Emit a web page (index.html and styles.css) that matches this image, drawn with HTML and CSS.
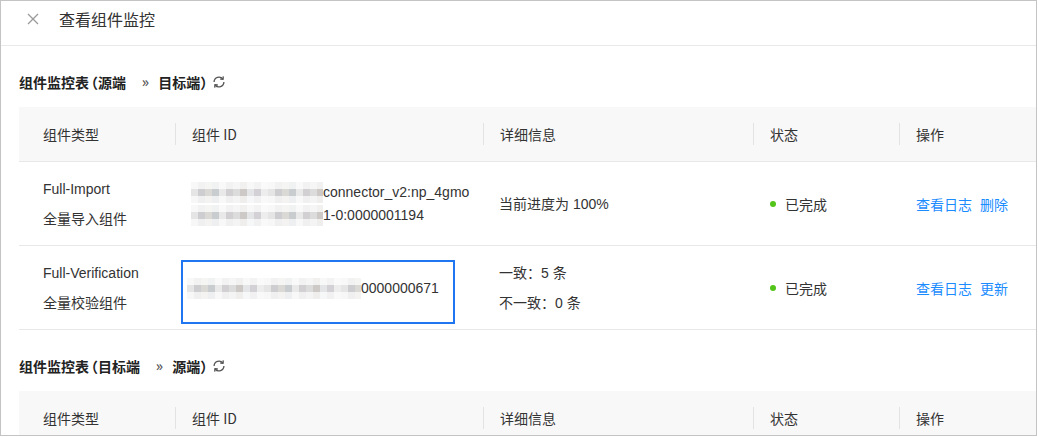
FILE: index.html
```html
<!DOCTYPE html>
<html lang="zh-CN">
<head>
<meta charset="utf-8">
<title>查看组件监控</title>
<link rel="stylesheet" href="styles.css">
</head>
<body>
<div class="frame">
  <header class="topbar">
    <svg class="close" width="12" height="12" viewBox="0 0 12 12" aria-hidden="true">
      <path d="M1 1L11 11M11 1L1 11" stroke="#9a9a9a" stroke-width="1.3" fill="none"/>
    </svg>
    <span class="title">查看组件监控</span>
  </header>

  <main class="content">
    <section class="block">
      <h2 class="block-title">组件监控表<span class="paren open">（</span>源端<span class="arrow">»</span>目标端<span class="paren close-p">）</span>
        <svg class="refresh" width="14" height="14" viewBox="0 0 16 16" aria-hidden="true">
          <path d="M2.4 8A5.6 5.6 0 0 1 12.4 4.6" stroke="#555" stroke-width="1.5" fill="none"/>
          <path d="M12.9 1.6L12.6 4.9L9.4 4.6" stroke="#555" stroke-width="1.5" fill="none"/>
          <path d="M13.6 8A5.6 5.6 0 0 1 3.6 11.4" stroke="#555" stroke-width="1.5" fill="none"/>
          <path d="M3.1 14.4L3.4 11.1L6.6 11.4" stroke="#555" stroke-width="1.5" fill="none"/>
        </svg>
      </h2>
      <div class="table">
        <div class="row head">
          <div class="cell first"><span class="th">组件类型</span></div>
          <div class="cell"><span class="th sep">组件 ID</span></div>
          <div class="cell"><span class="th sep">详细信息</span></div>
          <div class="cell"><span class="th sep">状态</span></div>
          <div class="cell"><span class="th sep">操作</span></div>
        </div>
        <div class="row body">
          <div class="cell first type"><div>Full-Import</div><div>全量导入组件</div></div>
          <div class="cell id">
            <div class="idline"><span class="blur w132"></span>connector_v2:np_4gmo</div>
            <div class="idline"><span class="blur w132"></span>1-0:0000001194</div>
          </div>
          <div class="cell detail"><div>当前进度为 100%</div></div>
          <div class="cell status"><span class="dot"></span>已完成</div>
          <div class="cell ops"><a href="#">查看日志</a><a href="#">删除</a></div>
        </div>
        <div class="row body">
          <div class="cell first type"><div>Full-Verification</div><div>全量校验组件</div></div>
          <div class="cell id editing">
            <div class="focusbox"><div class="idline"><span class="blur w174"></span>0000000671</div></div>
          </div>
          <div class="cell detail"><div>一致：5 条</div><div>不一致：0 条</div></div>
          <div class="cell status"><span class="dot"></span>已完成</div>
          <div class="cell ops"><a href="#">查看日志</a><a href="#">更新</a></div>
        </div>
      </div>
    </section>

    <section class="block">
      <h2 class="block-title">组件监控表<span class="paren open">（</span>目标端<span class="arrow">»</span>源端<span class="paren close-p">）</span>
        <svg class="refresh" width="14" height="14" viewBox="0 0 16 16" aria-hidden="true">
          <path d="M2.4 8A5.6 5.6 0 0 1 12.4 4.6" stroke="#555" stroke-width="1.5" fill="none"/>
          <path d="M12.9 1.6L12.6 4.9L9.4 4.6" stroke="#555" stroke-width="1.5" fill="none"/>
          <path d="M13.6 8A5.6 5.6 0 0 1 3.6 11.4" stroke="#555" stroke-width="1.5" fill="none"/>
          <path d="M3.1 14.4L3.4 11.1L6.6 11.4" stroke="#555" stroke-width="1.5" fill="none"/>
        </svg>
      </h2>
      <div class="table">
        <div class="row head">
          <div class="cell first"><span class="th">组件类型</span></div>
          <div class="cell"><span class="th sep">组件 ID</span></div>
          <div class="cell"><span class="th sep">详细信息</span></div>
          <div class="cell"><span class="th sep">状态</span></div>
          <div class="cell"><span class="th sep">操作</span></div>
        </div>
      </div>
    </section>
  </main>
</div>
</body>
</html>
```

FILE: styles.css
```css
* { box-sizing: border-box; }

html, body {
  margin: 0;
  padding: 0;
  background: #ffffff;
}

body {
  font-family: "Liberation Sans", "Noto Sans CJK SC", sans-serif;
  font-size: 14px;
  color: #333333;
}

.frame {
  width: 1037px;
  height: 436px;
  border: 1px solid #c4c4c4;
  overflow: hidden;
  background: #ffffff;
}

.topbar {
  height: 45px;
  display: flex;
  align-items: center;
  padding: 0 0 8px 26px;
  border-bottom: 1px solid #e9e9e9;
}

.close {
  display: block;
  flex: none;
}

.title {
  margin-left: 20px;
  font-family: "Noto Sans CJK SC", sans-serif;
  font-size: 16px;
  color: #333333;
  line-height: 22px;
}

.content {
  padding-left: 18px;
}

.block {
  padding-top: 25px;
}

.block-title {
  margin: 0 0 14px 0;
  height: 22px;
  line-height: 22px;
  font-family: "Noto Sans CJK SC", sans-serif;
  font-size: 14px;
  font-weight: 700;
  color: #222222;
  display: flex;
  align-items: center;
}

.paren {
  font-feature-settings: "halt";
}

.paren.open {
  margin-left: 2px;
}

.arrow {
  font-family: "Noto Sans", sans-serif;
  font-weight: 400;
  color: #555555;
  margin: 0 9px 0 16px;
}

.refresh {
  margin-left: 5px;
  display: block;
}

.table {
  width: 100%;
}

.row {
  display: grid;
  grid-template-columns: 156px 308px 270px 146px 1fr;
  border-bottom: 1px solid #e8e8e8;
}

.row.head {
  background: #f8f8f8;
  height: 55px;
}

.row.body {
  height: 84px;
}

.cell {
  display: flex;
  flex-direction: column;
  justify-content: center;
  padding-left: 16px;
  min-width: 0;
}

.cell.first {
  padding-left: 24px;
}

.row.head .cell {
  padding-left: 0;
}

.row.head .cell.first {
  padding-left: 24px;
}

.th {
  display: block;
  height: 22px;
  line-height: 22px;
  font-family: "Noto Sans CJK SC", sans-serif;
  color: #333333;
}

.th.sep {
  border-left: 1px solid #e3e3e3;
  padding-left: 16px;
}

.type {
  line-height: 30px;
  color: #333333;
}

.id {
  line-height: 23px;
  white-space: nowrap;
}

.id.editing {
  justify-content: flex-start;
  padding-top: 14px;
}

.idline {
  display: flex;
  align-items: center;
  height: 23px;
}

.blur {
  display: inline-block;
  flex: none;
  height: 21px;
  background-image:
    linear-gradient(180deg,
      rgba(255,255,255,0.75) 0 7px,
      rgba(255,255,255,0.05) 7px 14px,
      rgba(255,255,255,0.7) 14px 21px),
    repeating-linear-gradient(90deg,
      #e4e4e4 0 7px, #cbcbcf 7px 14px, #d9d7d4 14px 21px, #c6cacd 21px 28px,
      #e8e8e8 28px 35px, #d0cdd1 35px 42px, #dadada 42px 49px, #cac6c4 49px 56px,
      #e2e4e6 56px 63px, #d1cfd4 63px 70px, #ececec 70px 77px);
}

.w132 { width: 132px; }
.w174 { width: 174px; }

.focusbox {
  margin-left: -10px;
  width: 274px;
  height: 64px;
  border: 2px solid #1f76f0;
  padding: 15px 0 0 4px;
}

.detail {
  line-height: 30px;
}

.status {
  flex-direction: row;
  align-items: center;
  justify-content: flex-start;
  padding-left: 17px;
}

.dot {
  width: 6px;
  height: 6px;
  border-radius: 50%;
  background: #52c41a;
  margin-right: 9px;
  flex: none;
}

.ops {
  flex-direction: row;
  align-items: center;
  justify-content: flex-start;
  gap: 8px;
  padding-left: 17px;
}

.ops a {
  color: #1a8cff;
  text-decoration: none;
  font-family: "Noto Sans CJK SC", sans-serif;
}
```
